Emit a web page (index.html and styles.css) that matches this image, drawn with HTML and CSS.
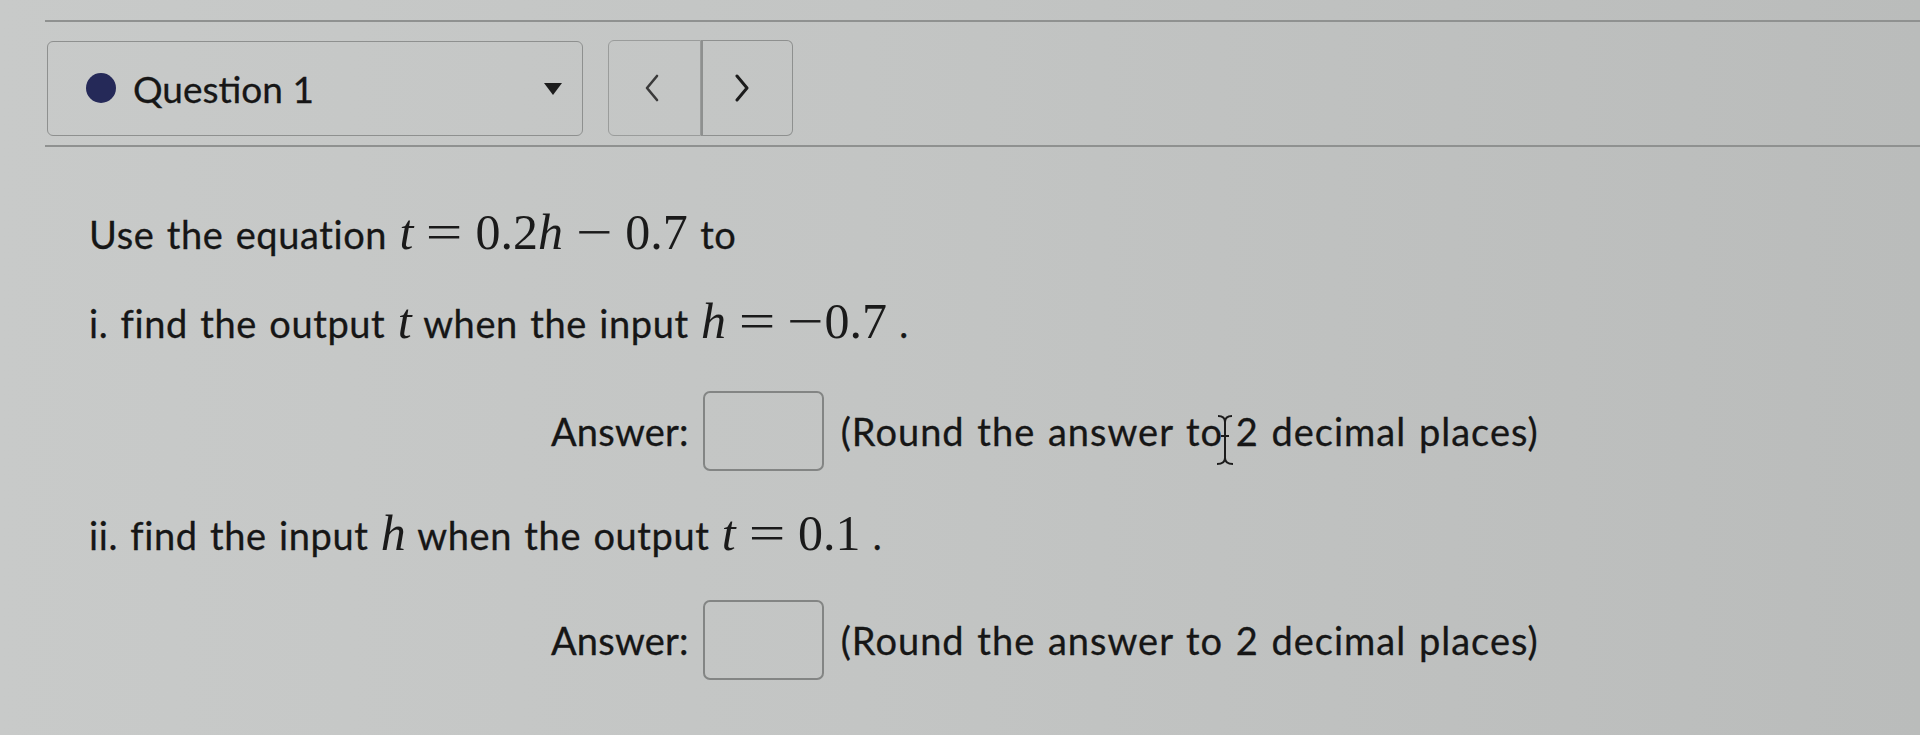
FILE: index.html
```html
<!DOCTYPE html>
<html lang="en">
<head>
<meta charset="utf-8">
<title>Question 1</title>
<link rel="stylesheet" href="styles.css">
</head>
<body>
<div class="page">
  <header class="toolbar">
    <div class="qselect">
      <span class="dot"></span>
      <span class="qlabel">Question 1</span>
      <svg class="caret" width="20" height="14" viewBox="0 0 20 14"><path d="M1 1 H19 L10 13 Z" fill="#1c1c1c"/></svg>
    </div>
    <div class="navgroup">
      <button class="navbtn" type="button" aria-label="Previous">
        <svg width="16" height="28" viewBox="0 0 16 28"><path d="M13 2 L3 14 L13 26" fill="none" stroke="#3a3a3a" stroke-width="2.6" stroke-linecap="round" stroke-linejoin="round"/></svg>
      </button>
      <button class="navbtn navbtn-next" type="button" aria-label="Next">
        <svg width="16" height="28" viewBox="0 0 16 28"><path d="M3 2 L13 14 L3 26" fill="none" stroke="#1c1c1c" stroke-width="3" stroke-linecap="round" stroke-linejoin="round"/></svg>
      </button>
    </div>
  </header>

  <main class="content">
    <p class="line line-intro">Use the equation <span class="math"><span class="mi">t</span><span class="mo">=</span><span class="mn">0.2</span><span class="mi">h</span><span class="mo">−</span><span class="mn">0.7</span></span> to</p>

    <p class="line line-part">i. find the output <span class="math"><span class="mi">t</span></span> when the input <span class="math"><span class="mi">h</span><span class="mo">=</span><span class="mu">−</span><span class="mn">0.7</span></span> .</p>

    <div class="answer-row">
      <span class="answer-label">Answer:</span>
      <input class="answer-box" type="text" aria-label="Answer i">
      <span class="answer-note">(Round the answer <span class="cursor-anchor">to<svg class="ibeam" width="20" height="52" viewBox="0 0 20 52"><path d="M3 2 Q10 2 10 8 Q10 2 17 2 M10 8 V44 M6 22 H14 M2 50 Q10 50 10 44 Q10 50 18 50" fill="none" stroke="#1c1c1c" stroke-width="2"/></svg></span> 2 decimal places)</span>
    </div>

    <p class="line line-part2">ii. find the input <span class="math"><span class="mi">h</span></span> when the output <span class="math"><span class="mi">t</span><span class="mo">=</span><span class="mn">0.1</span></span> .</p>

    <div class="answer-row answer-row-2">
      <span class="answer-label">Answer:</span>
      <input class="answer-box" type="text" aria-label="Answer ii">
      <span class="answer-note">(Round the answer to 2 decimal places)</span>
    </div>
  </main>
</div>
</body>
</html>
```

FILE: styles.css
```css
* { box-sizing: border-box; }

html, body {
  margin: 0;
  padding: 0;
}

body {
  min-height: 100vh;
  background: linear-gradient(90deg, #c8cac9 0%, #c3c5c4 45%, #babcbb 100%);
  font-family: Lato, "Open Sans", sans-serif;
  color: #161616;
  overflow: hidden;
}

.page {
  padding: 20px 0 0 45px;
}

.toolbar {
  display: flex;
  align-items: center;
  gap: 25px;
  padding: 18px 0 9px 2px;
  border-top: 2px solid #8f9190;
  border-bottom: 2px solid #8f9190;
}

.qselect {
  width: 536px;
  height: 95px;
  display: flex;
  align-items: center;
  padding: 0 19px 0 38px;
  border: 1.5px solid #8e908f;
  border-radius: 6px;
}

.dot {
  width: 30px;
  height: 30px;
  border-radius: 50%;
  background: #252958;
  flex: none;
}

.qlabel {
  margin-left: 17px;
  font-size: 37px;
  color: #161616;
  -webkit-text-stroke: 0.3px #161616;
  flex: 1;
}

.caret {
  flex: none;
  margin-top: 2px;
}

.navgroup {
  display: flex;
  height: 96px;
}

.navbtn {
  width: 93px;
  height: 96px;
  display: flex;
  align-items: center;
  justify-content: center;
  background: transparent;
  border: 1.5px solid #9a9c9b;
  border-radius: 6px 0 0 6px;
  padding: 0 6px 0 0;
}

.navbtn-next {
  width: 92px;
  padding: 0 12px 0 0;
  border-left: 2px solid #8e908f;
  border-color: #8e908f;
  border-radius: 0 6px 6px 0;
}

.content {
  padding-left: 44px;
}

.line {
  margin: 0;
  font-size: 38px;
  line-height: 48px;
  word-spacing: 2px;
  letter-spacing: 0.6px;
  -webkit-text-stroke: 0.3px #161616;
  white-space: nowrap;
}

.line-intro { margin-top: 63px; }
.line-part { margin-top: 41px; }
.line-part2 { margin-top: 40px; }

.math {
  font-family: "Liberation Serif", "DejaVu Serif", serif;
  font-size: 50px;
  line-height: 40px;
  letter-spacing: 0;
  word-spacing: 0;
  -webkit-text-stroke: 0;
  color: #1a1a1a;
}

.mi { font-style: italic; }

.mo,
.mu {
  display: inline-block;
  transform: scaleX(1.3);
}

.mo {
  margin: 0 0.34em;
}

.mu {
  margin: 0 0.1em 0 0.06em;
}

.answer-row {
  display: flex;
  align-items: center;
  margin-top: 44px;
  margin-left: 462px;
  height: 80px;
}

.answer-row-2 { margin-top: 41px; }

.answer-label {
  font-size: 38px;
  line-height: 48px;
  letter-spacing: 0.2px;
  -webkit-text-stroke: 0.3px #161616;
}

.answer-box {
  width: 121px;
  height: 80px;
  margin-left: 14px;
  background: transparent;
  border: 2px solid #838584;
  border-radius: 7px;
}

.answer-note {
  margin-left: 17px;
  font-size: 38px;
  line-height: 48px;
  word-spacing: 2px;
  letter-spacing: 1px;
  -webkit-text-stroke: 0.3px #161616;
  white-space: nowrap;
}

.cursor-anchor {
  position: relative;
}

.ibeam {
  position: absolute;
  left: calc(100% - 8px);
  top: 6px;
}
```
